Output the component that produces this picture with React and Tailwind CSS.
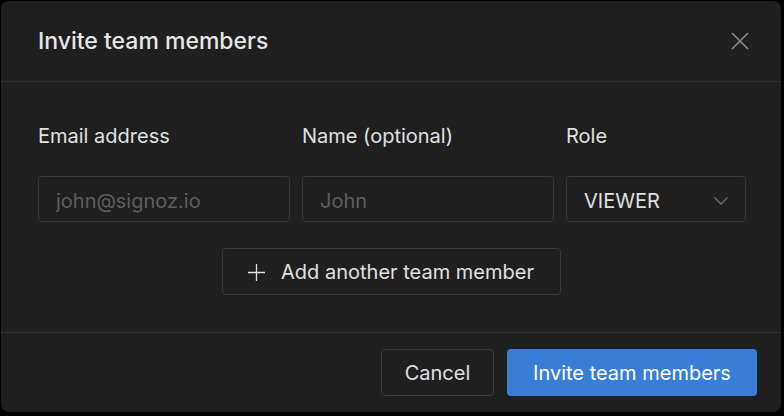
const font = { fontFamily: 'Inter, "Noto Sans", sans-serif' };

function Field({ placeholder, className }) {
  return (
    <input
      placeholder={placeholder}
      className={`h-[46px] rounded-[4px] border border-[#3a3a3a] bg-[#1f1f1f] px-[17px] pt-[3px] text-[20px] text-[#e5e5e5] placeholder:text-[#5e5e5e] outline-none ${className}`}
    />
  );
}

export default function App() {
  return (
    <div className="min-h-[416px] w-[784px] bg-black pl-px pt-px" style={font}>
      <div className="flex h-[411px] w-[780px] flex-col rounded-lg bg-[#1f1f1f]">
        {/* Header */}
        <div className="flex h-[81px] items-center justify-between border-b border-[#303030] pl-[37px] pr-[32px]">
          <h2 className="text-[23px] font-medium text-[#e6e6e6]">Invite team members</h2>
          <button className="text-[#8c8c8c]" aria-label="Close">
            <svg width="18" height="18" viewBox="0 0 18 18" fill="none" stroke="currentColor" strokeWidth="1.6">
              <path d="M1 1L17 17M17 1L1 17" />
            </svg>
          </button>
        </div>

        {/* Body */}
        <div className="flex flex-1 flex-col pl-[37px] pr-[35px] pt-[40px]">
          <div className="grid grid-cols-[252px_252px_180px] gap-x-[12px]">
            <label className="text-[20px] leading-[28px] text-[#e0e0e0]">Email address</label>
            <label className="text-[20px] leading-[28px] text-[#e0e0e0]">Name (optional)</label>
            <label className="text-[20px] leading-[28px] text-[#e0e0e0]">Role</label>
            <Field placeholder="john@signoz.io" className="mt-[26px] w-full" />
            <Field placeholder="John" className="mt-[26px] w-full" />
            <div className="mt-[26px] flex h-[46px] items-center justify-between rounded-[4px] border border-[#3a3a3a] pl-[17px] pr-[17px] pt-[3px]">
              <span className="text-[20px] text-[#e0e0e0]">VIEWER</span>
              <svg width="14" height="8" viewBox="0 0 14 8" fill="none" stroke="#6e6e6e" strokeWidth="1.3">
                <path d="M0.5 0.5L7 7L13.5 0.5" />
              </svg>
            </div>
          </div>
          <div className="mt-[26px] flex justify-center pr-[2px]">
            <button className="flex h-[47px] w-[339px] items-center justify-center gap-[16px] rounded-[4px] border border-[#3a3a3a] pt-[1px] text-[20px] text-[#e0e0e0]">
              <svg width="17" height="17" viewBox="0 0 17 17" fill="none" stroke="currentColor" strokeWidth="1.3">
                <path d="M8.5 0V17M0 8.5H17" />
              </svg>
              Add another team member
            </button>
          </div>
        </div>

        {/* Footer */}
        <div className="flex h-[80px] items-start justify-end gap-[13px] border-t border-[#303030] pr-[24px] pt-[16px]">
          <button className="h-[47px] w-[113px] rounded-[4px] border border-[#3a3a3a] text-[20px] text-[#e0e0e0]">
            Cancel
          </button>
          <button className="h-[47px] w-[250px] rounded-[4px] bg-[#387ed6] text-[20px] text-white">
            Invite team members
          </button>
        </div>
      </div>
    </div>
  );
}
